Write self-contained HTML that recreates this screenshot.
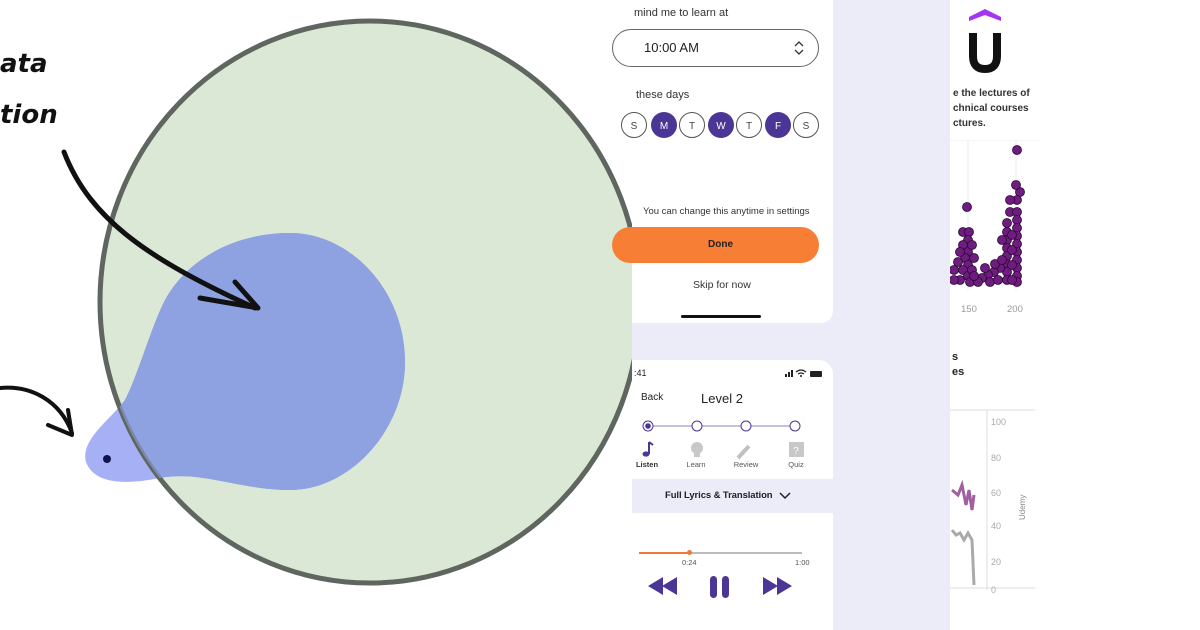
<!DOCTYPE html>
<html><head><meta charset="utf-8"><style>
*{margin:0;padding:0;box-sizing:border-box}
body{width:1200px;height:630px;overflow:hidden;background:#fff;position:relative;font-family:"Liberation Sans",sans-serif}
.abs{position:absolute}
.t{position:absolute;white-space:nowrap}
</style></head><body>
<svg class="abs" style="left:0;top:0" width="632" height="630">
<defs><clipPath id="c"><ellipse cx="370" cy="302" rx="270" ry="281"/></clipPath></defs>
<ellipse cx="370" cy="302" rx="270" ry="281" fill="#dbe8d5"/>
<path d="M290 233 C350 233 405 290 405 362 C405 430 350 490 290 490 C240 490 200 470 160 478 C130 484 95 486 86 462 C80 440 110 420 125 400 C140 370 150 330 165 300 C190 255 240 233 290 233Z" fill="#a6b0f5"/>
<path clip-path="url(#c)" d="M290 233 C350 233 405 290 405 362 C405 430 350 490 290 490 C240 490 200 470 160 478 C130 484 95 486 86 462 C80 440 110 420 125 400 C140 370 150 330 165 300 C190 255 240 233 290 233Z" fill="#8ea1e0"/>
<ellipse cx="370" cy="302" rx="270" ry="281" fill="none" stroke="#5f6660" stroke-width="5"/>
<path clip-path="url(#c)" d="M290 233 C350 233 405 290 405 362 C405 430 350 490 290 490 C240 490 200 470 160 478 C130 484 95 486 86 462 C80 440 110 420 125 400 C140 370 150 330 165 300 C190 255 240 233 290 233Z" fill="#8ea1e0" fill-opacity="0.6"/>
<circle cx="107" cy="459" r="4" fill="#0d1450"/>
<path d="M64 152 C90 220 150 260 255 308" fill="none" stroke="#111" stroke-width="5" stroke-linecap="round"/>
<path d="M200 298 L258 308 L235 282" fill="none" stroke="#111" stroke-width="5" stroke-linecap="round" stroke-linejoin="round"/>
<path d="M0 388 C30 385 60 400 72 433" fill="none" stroke="#111" stroke-width="4" stroke-linecap="round"/>
<path d="M48 425 L72 435 L68 410" fill="none" stroke="#111" stroke-width="4" stroke-linecap="round" stroke-linejoin="round"/>
<text x="0" y="72" font-family="DejaVu Sans,sans-serif" font-style="italic" font-weight="bold" font-size="26" fill="#111">ata</text>
<text x="0" y="123" font-family="DejaVu Sans,sans-serif" font-style="italic" font-weight="bold" font-size="26" fill="#111">tion</text>
</svg>
<div class="abs" style="left:632px;top:0;width:318px;height:630px;background:#ecebf8"></div>
<div class="abs" style="left:632px;top:0;width:201px;height:323px;background:#fff;border-radius:0 0 12px 0"></div>
<div class="t" style="left:634px;top:7px;font-size:11px;color:#333">mind me to learn at</div>
<div class="abs" style="left:612px;top:29px;width:207px;height:38px;border:1.5px solid #666;border-radius:19px"></div>
<div class="t" style="left:644px;top:40px;font-size:13px;color:#222">10:00 AM</div>
<svg class="abs" style="left:793px;top:40px" width="12" height="16"><path d="M2 6 L6 2 L10 6 M2 10 L6 14 L10 10" fill="none" stroke="#333" stroke-width="1.3"/></svg>
<div class="t" style="left:636px;top:89px;font-size:11px;color:#333">these days</div>
<svg class="abs" style="left:620px;top:111px" width="200" height="30">
<g font-family="Liberation Sans" font-size="10" text-anchor="middle">
<circle cx="14" cy="14" r="12.5" fill="#fff" stroke="#555"/><text x="14" y="18" fill="#444">S</text>
<circle cx="44" cy="14" r="13" fill="#4b3696"/><text x="44" y="18" fill="#fff">M</text>
<circle cx="72" cy="14" r="12.5" fill="#fff" stroke="#555"/><text x="72" y="18" fill="#444">T</text>
<circle cx="101" cy="14" r="13" fill="#4b3696"/><text x="101" y="18" fill="#fff">W</text>
<circle cx="129" cy="14" r="12.5" fill="#fff" stroke="#555"/><text x="129" y="18" fill="#444">T</text>
<circle cx="158" cy="14" r="13" fill="#4b3696"/><text x="158" y="18" fill="#fff">F</text>
<circle cx="186" cy="14" r="12.5" fill="#fff" stroke="#555"/><text x="186" y="18" fill="#444">S</text>
</g></svg>
<div class="t" style="left:643px;top:206px;font-size:9.5px;color:#333">You can change this anytime in settings</div>
<div class="abs" style="left:612px;top:227px;width:207px;height:36px;background:#f77f35;border-radius:18px"></div>
<div class="t" style="left:708px;top:239px;font-size:10px;font-weight:bold;color:#222">Done</div>
<div class="t" style="left:693px;top:279px;font-size:10.5px;color:#333">Skip for now</div>
<div class="abs" style="left:681px;top:315px;width:80px;height:3px;background:#111;border-radius:2px"></div>
<div class="abs" style="left:632px;top:360px;width:201px;height:270px;background:#fff;border-radius:0 14px 0 0"></div>
<div class="t" style="left:634px;top:368px;font-size:9px;color:#222">:41</div>
<svg class="abs" style="left:785px;top:368px" width="40" height="10"><rect x="0" y="6" width="2" height="3" fill="#222"/><rect x="3" y="4" width="2" height="5" fill="#222"/><rect x="6" y="2" width="2" height="7" fill="#222"/><path d="M11 4 Q16 0 21 4 M13 6 Q16 4 19 6" fill="none" stroke="#222" stroke-width="1.3"/><circle cx="16" cy="8" r="1" fill="#222"/><rect x="25" y="3" width="12" height="6" rx="1" fill="#222"/></svg>
<div class="t" style="left:641px;top:392px;font-size:10px;color:#222">Back</div>
<div class="t" style="left:701px;top:391px;font-size:13px;color:#222">Level 2</div>
<svg class="abs" style="left:636px;top:416px" width="180" height="60">
<line x1="17" y1="10" x2="154" y2="10" stroke="#8a85b8" stroke-width="1"/>
<circle cx="12" cy="10" r="5" fill="#fff" stroke="#4b3696"/><circle cx="12" cy="10" r="2.8" fill="#4b3696"/>
<circle cx="61" cy="10" r="5" fill="#fff" stroke="#4b3696"/>
<circle cx="110" cy="10" r="5" fill="#fff" stroke="#4b3696"/>
<circle cx="159" cy="10" r="5" fill="#fff" stroke="#4b3696"/>
<path d="M13 26 L13 38" stroke="#4b3696" stroke-width="2"/><ellipse cx="10" cy="38" rx="3.5" ry="2.6" fill="#4b3696"/><path d="M13 26 L17 29" stroke="#4b3696" stroke-width="2"/>
<circle cx="61" cy="32" r="6" fill="#c8c8c8"/><rect x="58" y="37" width="6" height="4" fill="#c8c8c8"/>
<path d="M102 42 L113 30" stroke="#c0c0c0" stroke-width="4"/>
<rect x="153" y="26" width="15" height="15" fill="#c8c8c8"/><text x="160" y="38" font-size="10" fill="#fff" text-anchor="middle" font-family="Liberation Sans">?</text>
<g font-family="Liberation Sans" font-size="7.5" fill="#555" text-anchor="middle"><text x="11" y="51" fill="#333" font-weight="bold">Listen</text><text x="60" y="51">Learn</text><text x="110" y="51">Review</text><text x="160" y="51">Quiz</text></g>
</svg>
<div class="abs" style="left:632px;top:479px;width:201px;height:34px;background:#ecebf8"></div>
<div class="t" style="left:665px;top:490px;font-size:9.5px;font-weight:bold;color:#222;letter-spacing:-0.1px">Full Lyrics &amp; Translation</div>
<svg class="abs" style="left:779px;top:492px" width="12" height="8"><path d="M1 1 L6 6 L11 1" fill="none" stroke="#222" stroke-width="1.5"/></svg>
<div class="abs" style="left:639px;top:552px;width:163px;height:2px;background:#bbb"></div>
<div class="abs" style="left:639px;top:552px;width:50px;height:2px;background:#f07a35"></div>
<div class="abs" style="left:687px;top:550px;width:5px;height:5px;border-radius:50%;background:#f07a35"></div>
<div class="t" style="left:682px;top:558px;font-size:7.5px;color:#555">0:24</div>
<div class="t" style="left:795px;top:558px;font-size:7.5px;color:#555">1:00</div>
<svg class="abs" style="left:645px;top:574px" width="160" height="26">
<path d="M3 12 L18 3 L18 21Z M17 12 L32 3 L32 21Z" fill="#4b3696"/>
<rect x="65" y="2" width="7" height="22" rx="3.5" fill="#4b3696"/><rect x="77" y="2" width="7" height="22" rx="3.5" fill="#4b3696"/>
<path d="M118 3 L133 12 L118 21Z M132 3 L147 12 L132 21Z" fill="#4b3696"/>
</svg>
<div class="abs" style="left:950px;top:0;width:250px;height:630px;background:#fff"></div>
<svg class="abs" style="left:966px;top:6px" width="40" height="70"><path d="M3 15 L3 11 L19 3 L35 11 L35 15 L19 9Z" fill="#a435f0"/><path d="M7 27 L7 50 Q7 63 19 63 Q31 63 31 50 L31 27" fill="none" stroke="#111" stroke-width="8"/></svg>
<div class="t" style="left:953px;top:86px;font-size:10px;font-weight:bold;color:#333;line-height:15px">e the lectures of<br>chnical courses<br>ctures.</div>
<svg class="abs" style="left:950px;top:140px" width="90" height="180">
<g stroke="#eee"><line x1="0" y1="0" x2="90" y2="0"/><line x1="18" y1="0" x2="18" y2="150"/><line x1="66" y1="0" x2="66" y2="150"/></g>
<g fill="#6e1c80" stroke="#2a0830" stroke-width="0.8">
<circle cx="67" cy="10" r="4.5"/><circle cx="17" cy="67" r="4.5"/><circle cx="60" cy="72" r="4.5"/><circle cx="67" cy="72" r="4.5"/><circle cx="67" cy="80" r="4.5"/><circle cx="67" cy="88" r="4.5"/><circle cx="57" cy="83" r="4.5"/><circle cx="57" cy="92" r="4.5"/><circle cx="57" cy="100" r="4.5"/><circle cx="67" cy="96" r="4.5"/><circle cx="67" cy="104" r="4.5"/><circle cx="67" cy="112" r="4.5"/><circle cx="67" cy="120" r="4.5"/><circle cx="67" cy="128" r="4.5"/><circle cx="67" cy="136" r="4.5"/><circle cx="67" cy="142" r="4.5"/>
<circle cx="13" cy="92" r="4.5"/><circle cx="19" cy="92" r="4.5"/><circle cx="18" cy="100" r="4.5"/><circle cx="13" cy="105" r="4.5"/><circle cx="18" cy="112" r="4.5"/><circle cx="15" cy="118" r="4.5"/><circle cx="18" cy="125" r="4.5"/><circle cx="13" cy="130" r="4.5"/><circle cx="18" cy="136" r="4.5"/><circle cx="10" cy="140" r="4.5"/><circle cx="4" cy="140" r="4.5"/><circle cx="4" cy="130" r="4.5"/><circle cx="8" cy="122" r="4.5"/><circle cx="24" cy="118" r="4.5"/><circle cx="22" cy="105" r="4.5"/><circle cx="10" cy="112" r="4.5"/><circle cx="22" cy="130" r="4.5"/><circle cx="20" cy="142" r="4.5"/>
<circle cx="57" cy="108" r="4.5"/><circle cx="57" cy="116" r="4.5"/><circle cx="57" cy="124" r="4.5"/><circle cx="57" cy="132" r="4.5"/><circle cx="57" cy="140" r="4.5"/><circle cx="62" cy="110" r="4.5"/><circle cx="62" cy="125" r="4.5"/><circle cx="62" cy="95" r="4.5"/><circle cx="62" cy="140" r="4.5"/><circle cx="50" cy="128" r="4.5"/><circle cx="44" cy="132" r="4.5"/><circle cx="38" cy="135" r="4.5"/><circle cx="32" cy="138" r="4.5"/><circle cx="28" cy="142" r="4.5"/><circle cx="40" cy="142" r="4.5"/><circle cx="48" cy="140" r="4.5"/><circle cx="24" cy="136" r="4.5"/><circle cx="35" cy="128" r="4.5"/><circle cx="45" cy="124" r="4.5"/><circle cx="52" cy="120" r="4.5"/><circle cx="70" cy="52" r="4.5"/><circle cx="67" cy="60" r="4.5"/><circle cx="66" cy="45" r="4.5"/><circle cx="60" cy="60" r="4.5"/><circle cx="52" cy="100" r="4.5"/>
</g>
<g font-family="Liberation Sans" font-size="9.5" fill="#999"><text x="11" y="172">150</text><text x="57" y="172">200</text></g>
</svg>
<div class="t" style="left:952px;top:350px;font-size:11px;font-weight:bold;color:#222;line-height:15px">s<br>es</div>
<svg class="abs" style="left:950px;top:405px" width="90" height="200">
<line x1="0" y1="5" x2="85" y2="5" stroke="#ddd"/><line x1="0" y1="183" x2="85" y2="183" stroke="#ddd"/>
<line x1="37" y1="5" x2="37" y2="185" stroke="#ddd"/>
<path d="M2 85 L8 90 L12 80 L16 100 L19 85 L22 105 L24 90" fill="none" stroke="#a060a0" stroke-width="3"/>
<path d="M2 125 L6 130 L10 128 L14 135 L18 128 L22 135 L24 180" fill="none" stroke="#aaa" stroke-width="3"/>
<g font-family="Liberation Sans" font-size="9" fill="#aaa"><text x="41" y="20">100</text><text x="41" y="56">80</text><text x="41" y="91">60</text><text x="41" y="124">40</text><text x="41" y="160">20</text><text x="41" y="188">0</text></g>
<text x="0" y="0" transform="translate(75,115) rotate(-90)" font-family="Liberation Sans" font-size="8" fill="#888">Udemy</text>
</svg>
</body></html>
